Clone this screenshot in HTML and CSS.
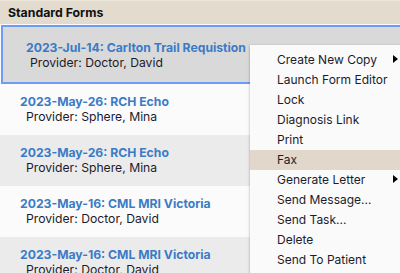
FILE: index.html
```html
<!DOCTYPE html>
<html>
<head>
<meta charset="utf-8">
<link rel="stylesheet" href="styles.css">
</head>
<body>
<div class="panel">
  <div class="header">Standard Forms</div>
  <div class="list">
    <div class="row selected">
      <div class="title">2023-Jul-14: Carlton Trail Requistion</div>
      <div class="provider">Provider: Doctor, David</div>
    </div>
    <div class="row light">
      <div class="title">2023-May-26: RCH Echo</div>
      <div class="provider">Provider: Sphere, Mina</div>
    </div>
    <div class="row grey">
      <div class="title">2023-May-26: RCH Echo</div>
      <div class="provider">Provider: Sphere, Mina</div>
    </div>
    <div class="row light">
      <div class="title">2023-May-16: CML MRI Victoria</div>
      <div class="provider">Provider: Doctor, David</div>
    </div>
    <div class="row grey">
      <div class="title">2023-May-16: CML MRI Victoria</div>
      <div class="provider">Provider: Doctor, David</div>
    </div>
  </div>
  <ul class="menu">
    <li class="item sub">Create New Copy</li>
    <li class="item">Launch Form Editor</li>
    <li class="item">Lock</li>
    <li class="item">Diagnosis Link</li>
    <li class="item">Print</li>
    <li class="item active">Fax</li>
    <li class="item sub">Generate Letter</li>
    <li class="item">Send Message...</li>
    <li class="item">Send Task...</li>
    <li class="item">Delete</li>
    <li class="item">Send To Patient</li>
  </ul>
</div>
</body>
</html>
```
FILE: styles.css
```css
html, body {
  margin: 0;
  padding: 0;
  background: #fbfbfb;
}
body {
  font-family: Inter, "Noto Sans", sans-serif;
  width: 400px;
  height: 273px;
  overflow: hidden;
}
.panel {
  position: relative;
  width: 400px;
  height: 273px;
  overflow: hidden;
}
.header {
  height: 24px;
  line-height: 24px;
  padding-left: 8px;
  background: #e3dbce;
  color: #111;
  font-weight: 700;
  font-size: 12.3px;
  border-top: 1px solid #ece6dc;
  box-sizing: border-box;
}
.list {
  margin-top: 1px;
}
.row {
  height: 51px;
  box-sizing: border-box;
  padding: 10px 0 0 20px;
}
.row.light { background: #fbfbfb; }
.row.grey { background: #ebebeb; }
.row.selected {
  height: 59px;
  margin-left: 1px;
  background: #d9d9d9;
  border: 2px solid #6f9cf3;
  border-right: none;
  padding: 13px 0 0 23px;
}
.title {
  font-size: 12.2px;
  font-weight: 700;
  line-height: 15px;
  color: #3b7bc6;
  white-space: nowrap;
}
.provider {
  font-size: 12.2px;
  line-height: 15px;
  color: #1b1b2b;
  padding-left: 6px;
  white-space: nowrap;
}
.row.selected .provider { padding-left: 4px; }
.menu {
  position: absolute;
  left: 250px;
  top: 45px;
  width: 156px;
  margin: 0;
  padding: 5px 0;
  list-style: none;
  background: #fafafa;
  box-shadow: -1px 0 2px rgba(0,0,0,0.12), 0 1px 2px rgba(0,0,0,0.1);
}
.item {
  position: relative;
  height: 20px;
  line-height: 20px;
  padding-left: 27px;
  font-size: 12px;
  color: #1c1c2c;
  white-space: nowrap;
}
.item.active { background: #e1d8cb; }
.item.sub::after {
  content: "";
  position: absolute;
  left: 143px;
  top: 5px;
  border-top: 4.5px solid transparent;
  border-bottom: 4.5px solid transparent;
  border-left: 5px solid #000;
}
```
